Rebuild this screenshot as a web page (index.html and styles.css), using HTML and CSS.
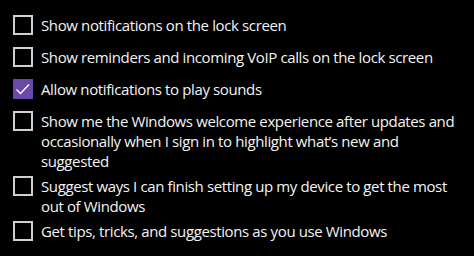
FILE: index.html
```html
<!DOCTYPE html>
<html>
<head>
<meta charset="utf-8">
<link rel="stylesheet" href="styles.css">
</head>
<body>
<ul class="list">
  <li class="item"><span class="box"></span><span class="label">Show notifications on the lock screen</span></li>
  <li class="item"><span class="box"></span><span class="label">Show reminders and incoming VoIP calls on the lock screen</span></li>
  <li class="item"><span class="box checked"><svg viewBox="0 0 20 20" width="20" height="20"><path d="M3.5 10.5 L7.5 14.5 L16 5.5" fill="none" stroke="#fff" stroke-width="1.4"/></svg></span><span class="label">Allow notifications to play sounds</span></li>
  <li class="item"><span class="box"></span><span class="label">Show me the Windows welcome experience after updates and occasionally when I sign in to highlight what’s new and suggested</span></li>
  <li class="item"><span class="box"></span><span class="label">Suggest ways I can finish setting up my device to get the most out of Windows</span></li>
  <li class="item"><span class="box"></span><span class="label">Get tips, tricks, and suggestions as you use Windows</span></li>
</ul>
</body>
</html>
```
FILE: styles.css
```css
html, body {
  margin: 0;
  padding: 0;
  background: #000;
}
body {
  width: 474px;
  height: 256px;
  overflow: hidden;
  font-family: "Open Sans", "Noto Sans", sans-serif;
  font-size: 15px;
  letter-spacing: -0.38px;
  color: #f4f4f4;
}
.list {
  list-style: none;
  margin: 0;
  padding: 15px 14px 0 13px;
  display: flex;
  flex-direction: column;
  gap: 5px;
}
.item {
  display: flex;
  align-items: flex-start;
  gap: 8px;
  min-height: 27px;
}
.box {
  flex: none;
  width: 20px;
  height: 20px;
  box-sizing: border-box;
  border: 2px solid #cfcfcf;
}
.box.checked {
  border: none;
  background: #6a4aa8;
}
.box svg {
  display: block;
}
.label {
  line-height: 20px;
}
```
